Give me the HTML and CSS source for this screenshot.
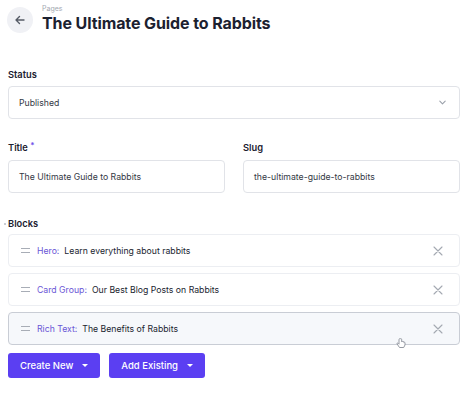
FILE: index.html
```html
<!DOCTYPE html>
<html lang="en">
<head>
  <meta charset="UTF-8">
  <meta name="viewport" content="width=device-width, initial-scale=1.0">
  <title>The Ultimate Guide to Rabbits</title>
  <link rel="stylesheet" href="styles.css">
</head>
<body>

<div id="page">
  <div class="header">
    <button class="back-button">
      <svg width="12" height="12" viewBox="0 0 12 12" fill="none" stroke="#555b66" stroke-width="1.4" stroke-linecap="round" stroke-linejoin="round">
        <path d="M10 6H2M5.5 2.5L2 6l3.5 3.5"/>
      </svg>
    </button>
    <div class="header-text">
      <div class="crumb">Pages</div>
      <h1>The Ultimate Guide to Rabbits</h1>
    </div>
  </div>

  <div class="field">
    <label>Status</label>
    <div class="input select">
      <span>Published</span>
      <svg width="9" height="9" viewBox="0 0 10 10" fill="none" stroke="#9aa0aa" stroke-width="1.2" stroke-linecap="round" stroke-linejoin="round">
        <path d="M2 3.5l3 3 3-3"/>
      </svg>
    </div>
  </div>

  <div class="field-row">
    <div class="field">
      <label>Title <span class="required">*</span></label>
      <div class="input">The Ultimate Guide to Rabbits</div>
    </div>
    <div class="field">
      <label>Slug</label>
      <div class="input">the-ultimate-guide-to-rabbits</div>
    </div>
  </div>

  <div class="field">
    <label class="blocks-label"><span class="dot"></span>Blocks</label>
    <div class="block-list">
      <div class="block">
        <span class="handle"></span>
        <span class="block-type">Hero:</span>
        <span class="block-title">Learn everything about rabbits</span>
        <svg class="remove" width="10" height="10" viewBox="0 0 10 10" stroke="#a4a9b2" stroke-width="1.1" stroke-linecap="round"><path d="M1 1l8 8M9 1L1 9"/></svg>
      </div>
      <div class="block">
        <span class="handle"></span>
        <span class="block-type">Card Group:</span>
        <span class="block-title">Our Best Blog Posts on Rabbits</span>
        <svg class="remove" width="10" height="10" viewBox="0 0 10 10" stroke="#a4a9b2" stroke-width="1.1" stroke-linecap="round"><path d="M1 1l8 8M9 1L1 9"/></svg>
      </div>
      <div class="block active">
        <span class="handle"></span>
        <span class="block-type">Rich Text:</span>
        <span class="block-title">The Benefits of Rabbits</span>
        <svg class="remove" width="10" height="10" viewBox="0 0 10 10" stroke="#a4a9b2" stroke-width="1.1" stroke-linecap="round"><path d="M1 1l8 8M9 1L1 9"/></svg>
        <svg class="cursor" width="10" height="11" viewBox="0 0 10 11" fill="#fff" stroke="#8a8f99" stroke-width="0.9">
          <path d="M3 1.2v5l-1-1c-.6-.5-1.4.2-.9.8L3.5 9.5h4.2L9 7V4.8c0-.5-.8-.7-1.1-.2v-.6c0-.5-.9-.6-1.1-.1-.1-.6-1-.6-1.1 0V1.2C5.7.5 3 .5 3 1.2z"/>
        </svg>
      </div>
    </div>
  </div>

  <div class="actions">
    <button class="primary-button">Create New <span class="caret"></span></button>
    <button class="primary-button">Add Existing <span class="caret"></span></button>
  </div>
</div>

</body>
</html>
```

FILE: styles.css
```css
body {
    margin: 0;
    padding: 0;
    background: #fff;
    font-family: 'Inter', 'Liberation Sans', sans-serif;
    color: #1f2430;
}

#page {
    padding: 7px 14px 0 8px;
}

.header {
    display: flex;
    align-items: flex-start;
    gap: 9px;
    margin-bottom: 35px;
}

.back-button {
    width: 26px;
    height: 26px;
    margin-left: -1px;
    border: none;
    border-radius: 50%;
    background: #f0f1f5;
    display: flex;
    align-items: center;
    justify-content: center;
    padding: 0;
}

.header-text {
    margin-top: -3px;
}

.crumb {
    font-size: 7px;
    line-height: 9px;
    color: #a3a8b1;
}

h1 {
    margin: 0;
    font-size: 16px;
    line-height: 20px;
    font-weight: 700;
    color: #1c2130;
    letter-spacing: -0.1px;
}

.field {
    display: flex;
    flex-direction: column;
    margin-bottom: 22px;
}

label {
    font-size: 9.3px;
    line-height: 14px;
    font-weight: 600;
    color: #1c2130;
    margin-bottom: 4px;
}

.blocks-label {
    position: relative;
    margin-top: 2px;
    margin-bottom: 3px;
}

.required {
    color: #6d4ee8;
    font-size: 8px;
    line-height: 0;
    vertical-align: 3px;
}

.input {
    height: 33px;
    box-sizing: border-box;
    border: 1px solid #e1e3e8;
    border-radius: 4px;
    padding: 0 10px;
    display: flex;
    align-items: center;
    font-size: 8.7px;
    color: #333844;
}

.select {
    justify-content: space-between;
    padding-right: 12px;
}

.field-row {
    display: grid;
    grid-template-columns: 1fr 1fr;
    column-gap: 18px;
}

.field-row label {
    margin-bottom: 5px;
}

.blocks-label .dot {
    position: absolute;
    left: -4px;
    top: 6px;
    width: 2px;
    height: 2px;
    border-radius: 50%;
    background: #b9bcc4;
}

.block-list {
    display: flex;
    flex-direction: column;
    gap: 6px;
}

.block {
    position: relative;
    height: 33px;
    box-sizing: border-box;
    border: 1px solid #eceef2;
    border-radius: 4px;
    display: flex;
    align-items: center;
    padding: 0 16px 0 12px;
    font-size: 8.7px;
    color: #20242f;
}

.block.active {
    background: #f6f8fb;
    border-color: #c9cdd5;
}

.handle {
    width: 9px;
    height: 3px;
    border-top: 1px solid #a8adb6;
    border-bottom: 1px solid #a8adb6;
    margin-right: 7px;
}

.block-type {
    color: #6a56d6;
    margin-right: 5px;
}

.block-title {
    flex: 1;
}

.cursor {
    position: absolute;
    left: 387px;
    top: 25px;
}

.actions {
    display: flex;
    gap: 9px;
    margin-top: -14px;
}

.primary-button {
    height: 25px;
    border: none;
    border-radius: 3px;
    background: #5b3ff2;
    color: #fff;
    font-family: 'Inter', 'Liberation Sans', sans-serif;
    font-size: 9.5px;
    font-weight: 500;
    padding: 0 12px;
    display: flex;
    align-items: center;
    gap: 9px;
}

.caret {
    width: 0;
    height: 0;
    border-left: 3px solid transparent;
    border-right: 3px solid transparent;
    border-top: 3px solid #fff;
}
```
